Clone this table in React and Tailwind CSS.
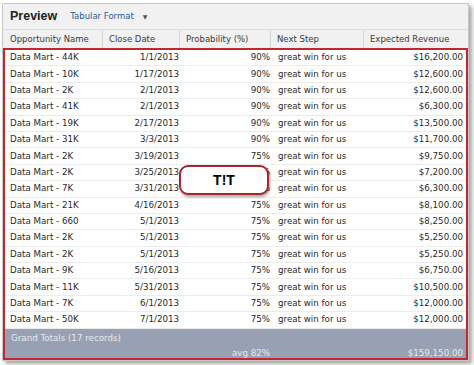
import React from "react";

const rows = [
    ["Data Mart - 44K", "1/1/2013", "90%", "$16,200.00"],
    ["Data Mart - 10K", "1/17/2013", "90%", "$12,600.00"],
    ["Data Mart - 2K", "2/1/2013", "90%", "$12,600.00"],
    ["Data Mart - 41K", "2/1/2013", "90%", "$6,300.00"],
    ["Data Mart - 19K", "2/17/2013", "90%", "$13,500.00"],
    ["Data Mart - 31K", "3/3/2013", "90%", "$11,700.00"],
    ["Data Mart - 2K", "3/19/2013", "75%", "$9,750.00"],
    ["Data Mart - 2K", "3/25/2013", "75%", "$7,200.00"],
    ["Data Mart - 7K", "3/31/2013", "75%", "$6,300.00"],
    ["Data Mart - 21K", "4/16/2013", "75%", "$8,100.00"],
    ["Data Mart - 660", "5/1/2013", "75%", "$8,250.00"],
    ["Data Mart - 2K", "5/1/2013", "75%", "$5,250.00"],
    ["Data Mart - 2K", "5/1/2013", "75%", "$5,250.00"],
    ["Data Mart - 9K", "5/16/2013", "75%", "$6,750.00"],
    ["Data Mart - 11K", "5/31/2013", "75%", "$10,500.00"],
    ["Data Mart - 7K", "6/1/2013", "75%", "$12,000.00"],
    ["Data Mart - 50K", "7/1/2013", "75%", "$12,000.00"],
];

const cols = "grid grid-cols-[100px_77px_91px_93px_1fr]";

function App() {
    return (
        <div
            className="w-[474px] h-[365px] bg-white pt-[3px] pl-[2px] overflow-hidden"
            style={{ fontFamily: "'DejaVu Sans', Verdana, sans-serif" }}
        >
            <div className="w-[467px] border border-[#c9c9c9] bg-[#f1f1f1] shadow-[3px_3px_4px_rgba(0,0,0,0.35)]">
                {/* title bar */}
                <div className="h-[25px] flex items-center pl-[7px]">
                    <span
                        className="text-[12.5px] font-bold text-[#222]"
                        style={{ fontFamily: "'Liberation Sans', Arial, sans-serif" }}
                    >
                        Preview
                    </span>
                    <span className="ml-[13px] text-[8.5px] text-[#2a5d9a]">Tabular Format</span>
                    <span className="ml-[9px] text-[6px] text-[#555]">▼</span>
                </div>

                {/* column headers */}
                <div className={`${cols} h-[19px] border-t border-[#dcdcdc] text-[8.5px] text-[#3a3a3a]`}>
                    <div className="pl-[7px] flex items-center border-r border-[#d6d6d6]">Opportunity Name</div>
                    <div className="pl-[6px] flex items-center border-r border-[#d6d6d6]">Close Date</div>
                    <div className="pl-[6px] flex items-center border-r border-[#d6d6d6]">Probability (%)</div>
                    <div className="pl-[6px] flex items-center border-r border-[#d6d6d6]">Next Step</div>
                    <div className="pl-[6px] flex items-center">Expected Revenue</div>
                </div>

                {/* data area */}
                <div className="relative border-2 border-[#c0282e] bg-white text-[8.7px] text-[#2a2a2a]">
                    {rows.map((r, i) => (
                        <div key={i} className={`${cols} h-[16.4px] items-center border-b border-[#ececec]`}>
                            <div className="pl-[5px] whitespace-nowrap">{r[0]}</div>
                            <div className="text-right pr-[3px]">{r[1]}</div>
                            <div className="text-right pr-[3px]">{r[2]}</div>
                            <div className="pl-[5px] whitespace-nowrap">great win for us</div>
                            <div className="text-right pr-[3px]">{r[3]}</div>
                        </div>
                    ))}

                    {/* grand totals */}
                    <div className="bg-[#98a1b3] text-[#e6e9ef] h-[29px]">
                        <div className="pl-[6px] pt-[3px]">Grand Totals (17 records)</div>
                        <div className={`${cols} mt-[2px]`}>
                            <div></div>
                            <div></div>
                            <div className="text-right pr-[3px]">avg 82%</div>
                            <div></div>
                            <div className="text-right pr-[3px]">$159,150.00</div>
                        </div>
                    </div>

                    {/* callout */}
                    <div className="absolute left-[174px] top-[115px] w-[90px] h-[30px] bg-white border-2 border-[#a8262c] rounded-[9px] shadow-[1px_2px_3px_rgba(0,0,0,0.35)] flex items-center justify-center">
                        <span
                            className="text-[14px] font-bold text-black"
                            style={{ fontFamily: "'Liberation Sans', Arial, sans-serif" }}
                        >
                            T!T
                        </span>
                    </div>
                </div>
            </div>
        </div>
    );
}

export default App;
